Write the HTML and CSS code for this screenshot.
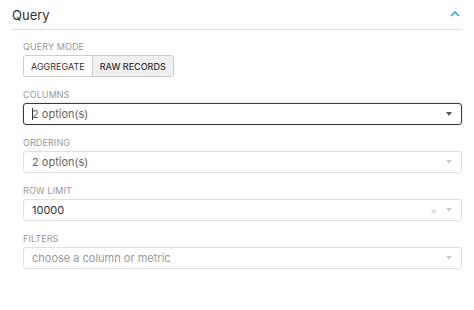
FILE: index.html
```html
<!DOCTYPE html>
<html lang="en">
<head>
  <meta charset="UTF-8">
  <meta name="viewport" content="width=device-width, initial-scale=1.0">
  <title>Query</title>
  <link rel="stylesheet" href="styles.css">
</head>
<body>
  <div class="panel">
    <div class="panel-header">
      <span class="panel-title">Query</span>
      <svg class="chevron" width="10" height="6" viewBox="0 0 10 6">
        <path d="M1 5 L5 1 L9 5" fill="none" stroke="#20a7c9" stroke-width="1.4"/>
      </svg>
    </div>

    <div class="panel-body">
      <div class="control">
        <div class="label">QUERY MODE</div>
        <div class="toggle">
          <button class="toggle-btn">AGGREGATE</button>
          <button class="toggle-btn active">RAW RECORDS</button>
        </div>
      </div>

      <div class="control">
        <div class="label">COLUMNS</div>
        <div class="select focused">
          <span class="value"><span class="caret"></span>2 option(s)</span>
          <span class="arrow dark"></span>
        </div>
      </div>

      <div class="control">
        <div class="label">ORDERING</div>
        <div class="select">
          <span class="value">2 option(s)</span>
          <span class="arrow"></span>
        </div>
      </div>

      <div class="control">
        <div class="label">ROW LIMIT</div>
        <div class="select">
          <span class="value strong">10000</span>
          <span class="clear">×</span>
          <span class="arrow"></span>
        </div>
      </div>

      <div class="control">
        <div class="label">FILTERS</div>
        <div class="select">
          <span class="value muted">choose a column or metric</span>
          <span class="arrow"></span>
        </div>
      </div>
    </div>
  </div>
</body>
</html>
```

FILE: styles.css
```css
body {
  margin: 0;
  background: #fff;
  font-family: Inter, "Noto Sans", sans-serif;
}
.panel {
  padding: 0 12px;
}
.panel-header {
  display: flex;
  justify-content: space-between;
  align-items: center;
  height: 28px;
  border-bottom: 1px solid #e0e0e0;
  padding-top: 1px;
}
.panel-title {
  font-size: 13px;
  color: #323232;
}
.chevron {
  margin-right: 2px;
  margin-top: -2px;
}
.panel-body {
  padding: 12px 0 0 11px;
}
.control {
  margin-bottom: 13px;
}
.label {
  font-size: 9px;
  color: #999;
  letter-spacing: 0.1px;
  line-height: 10px;
  margin-bottom: 3px;
}
.toggle {
  display: flex;
  width: fit-content;
  height: 20px;
  border: 1px solid #ccc;
  border-radius: 3px;
  overflow: hidden;
}
.toggle-btn {
  font-family: inherit;
  font-size: 9px;
  color: #333;
  background: #fff;
  border: none;
  height: 20px;
  padding: 0 7px;
  margin: 0;
}
.toggle-btn.active {
  background: #f0f0f0;
  border-left: 1px solid #ccc;
  font-weight: 500;
}
.select {
  display: flex;
  align-items: center;
  height: 20px;
  border: 1px solid #e0e0e0;
  border-radius: 3px;
  padding: 0 8px;
}
.select.focused {
  border-color: #3a3a3a;
  box-shadow: 0 0 2px rgba(0, 0, 0, 0.25);
}
.value {
  flex: 1;
  font-size: 11px;
  color: #666;
  display: flex;
  align-items: center;
}
.value.strong {
  color: #333;
}
.value.muted {
  color: #999;
}
.caret {
  display: inline-block;
  width: 1px;
  height: 12px;
  background: #333;
  margin-right: -1px;
}
.clear {
  font-size: 10px;
  color: #ccc;
  margin-right: 9px;
}
.arrow {
  width: 0;
  height: 0;
  border-left: 3.5px solid transparent;
  border-right: 3.5px solid transparent;
  border-top: 4px solid #ccc;
  margin-right: 1px;
}
.arrow.dark {
  border-top-color: #555;
}
```
